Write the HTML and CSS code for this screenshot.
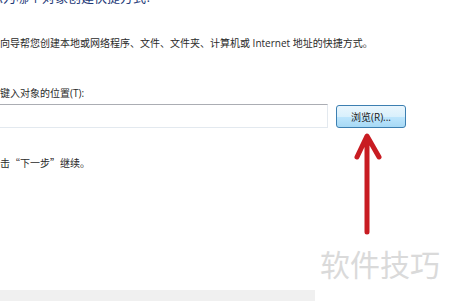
FILE: index.html
```html
<!DOCTYPE html>
<html lang="zh-CN">
  <head>
    <meta charset="UTF-8" />
    <title>创建快捷方式</title>
    <link rel="stylesheet" href="styles.css">
  </head>
  <body>
    <div class="dialog">
      <h1 class="title">想为哪个对象创建快捷方式?</h1>
      <p class="intro">该向导帮您创建本地或网络程序、文件、文件夹、计算机或 Internet 地址的快捷方式。</p>
      <label class="field-label" for="location">请键入对象的位置(T):</label>
      <div class="field-row">
        <input type="text" class="location" id="location" />
        <button class="browse">浏览(R)...</button>
      </div>
      <p class="hint">单击“下一步”继续。</p>
    </div>

    <div class="footer-bar"></div>

    <svg class="arrow" width="40" height="110" viewBox="0 0 40 110">
      <path d="M17 102 L17 7 M7 27 L17 6 L29 27" fill="none" stroke="#c81c22" stroke-width="5" stroke-linecap="round" stroke-linejoin="round" />
    </svg>

    <div class="watermark">软件技巧</div>
  </body>
</html>
```

FILE: styles.css
```css
* {
  margin: 0;
  padding: 0;
  box-sizing: border-box;
}

body {
  width: 450px;
  height: 301px;
  overflow: hidden;
  position: relative;
  display: flex;
  flex-direction: column;
  background-color: #ffffff;
  font-family: "Open Sans", "Noto Sans CJK SC", sans-serif;
  font-size: 10px;
  color: #2a2a2a;
}

.dialog {
  margin-left: -10px;
}

.title {
  margin-top: -11px;
  font-size: 13px;
  font-weight: normal;
  line-height: 16px;
  color: #1e3a78;
}

.intro {
  margin-top: 31px;
  line-height: 14px;
}

.field-label {
  display: block;
  margin-top: 36px;
  line-height: 14px;
}

.field-row {
  display: flex;
  align-items: center;
  gap: 8px;
  margin-top: 4px;
  height: 24px;
}

.location {
  width: 338px;
  height: 24px;
  border: 1px solid #e3e9ef;
  border-top-color: #abadb3;
  outline: none;
  background: #ffffff;
}

.browse {
  width: 70px;
  height: 23px;
  border: 1px solid #3c7fb1;
  border-radius: 3px;
  background: linear-gradient(#eaf6fd 0%, #d9f0fc 50%, #bee6fd 51%, #a7d9f5 100%);
  font-family: inherit;
  font-size: 10px;
  color: #1a1a1a;
}

.hint {
  margin-top: 28px;
  line-height: 14px;
  font-family: "Noto Sans CJK SC", sans-serif;
}

.footer-bar {
  margin-top: auto;
  width: 315px;
  height: 11px;
  background-color: #f0f0f0;
}

.arrow {
  position: absolute;
  left: 350px;
  top: 130px;
}

.watermark {
  position: absolute;
  left: 320px;
  top: 246px;
  font-family: "Noto Sans CJK SC", sans-serif;
  font-size: 30px;
  line-height: 34px;
  color: #dadada;
}
```
